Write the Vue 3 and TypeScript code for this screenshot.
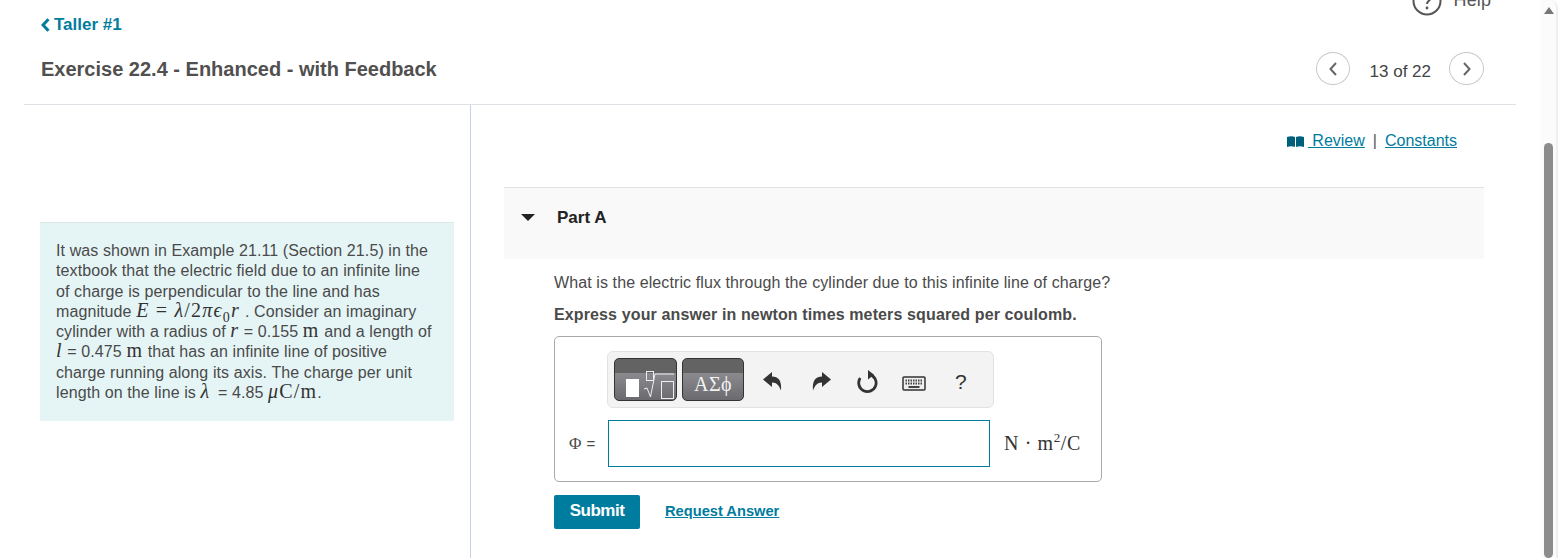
<template>
  <div class="page">
    <main class="content">
      <header class="top">
        <div class="help-row">
          <svg class="help-icon" width="30" height="30" viewBox="0 0 30 30">
            <circle cx="15" cy="15" r="13.500" fill="none" stroke="#555" stroke-width="2" />
            <path d="M11 11.500c0-5 8-5 8 0 0 3-4 3-4 6.500" fill="none" stroke="#555" stroke-width="2" />
            <circle cx="15" cy="22" r="1.400" fill="#555" />
          </svg>
          <span class="help-text">Help</span>
        </div>
        <a class="back" href="#">
          <svg width="9" height="14" viewBox="0 0 9 14"><path d="M7.500 1.200 2 7l5.500 5.800" fill="none" stroke="#007c9e" stroke-width="3" /></svg>
          Taller #1
        </a>
        <div class="title-row">
          <h1>Exercise 22.4 - Enhanced - with Feedback</h1>
          <nav class="pager">
            <button class="round prev" aria-label="Previous">
              <svg width="10" height="14" viewBox="0 0 10 14"><path d="M8 1 2.500 7 8 13" fill="none" stroke="#666" stroke-width="2" /></svg>
            </button>
            <span class="count">13 of 22</span>
            <button class="round next" aria-label="Next">
              <svg width="10" height="14" viewBox="0 0 10 14"><path d="M2 1l5.500 6L2 13" fill="none" stroke="#666" stroke-width="2" /></svg>
            </button>
          </nav>
        </div>
      </header>

      <div class="columns">
        <aside class="left">
          <div class="intro">
            It was shown in Example 21.11 (Section 21.5) in the textbook that the electric field due to an infinite line of charge is perpendicular to the line and has magnitude
            <span class="m formula"><i>E</i> = <i>λ</i>/2<i>πϵ</i><sub>0</sub><i>r</i></span>. Consider an imaginary cylinder with a radius of <span class="m"><i>r</i></span> = 0.155 <span class="m">m</span> and a length of <span class="m"><i>l</i></span> = 0.475 <span class="m">m</span> that has an infinite line of positive charge running along its axis. The charge per unit length on the line is <span class="m lambda"><i>λ</i></span> = 4.85 <span class="m"><i>μ</i>C/m</span>.
          </div>
        </aside>

        <section class="right">
          <div class="links">
            <svg width="17" height="11" viewBox="0 0 17 11"><path d="M0 1c3-1 5.500-1 8 0v10c-2.500-1-5-1-8 0zM9 1c2.500-1 5-1 8 0v10c-3-1-5.500-1-8 0z" fill="#00607c" /></svg>
            <a href="#">&nbsp;Review</a>
            <span class="sep">|</span>
            <a href="#">Constants</a>
          </div>

          <div class="part-head">
            <span class="caret"></span>
            <strong>Part A</strong>
          </div>

          <div class="part-body">
            <p class="question">What is the electric flux through the cylinder due to this infinite line of charge?</p>
            <p class="express">Express your answer in newton times meters squared per coulomb.</p>

            <div class="answer">
              <div class="toolbar">
                <div class="tool tool-a">
                  <span class="tmpl-box"></span>
                  <svg width="32" height="31" viewBox="0 0 32 31">
                    <rect x="3.500" y="2.500" width="7" height="9" fill="none" stroke="#eee" />
                    <path d="M1 20l3-1 3.500 9L12 5h19" fill="none" stroke="#eee" />
                    <rect x="18.500" y="12.500" width="12" height="17" fill="none" stroke="#eee" />
                  </svg>
                </div>
                <div class="tool tool-b">ΑΣϕ</div>
                <div class="icons">
                  <svg class="undo" width="19" height="19" viewBox="0 0 19 19"><path d="M0 7.500 9 0v4.500c6 0 10 3.500 9 14-2-5-4-8-9-8V15z" fill="#333" /></svg>
                  <svg class="redo" width="19" height="19" viewBox="0 0 19 19"><path d="M19 7.500 10 0v4.500c-6 0-10 3.500-9 14 2-5 4-8 9-8V15z" fill="#333" /></svg>
                  <svg class="reload" width="21" height="23" viewBox="0 0 21 23"><path d="M12 4.300a8.700 8.700 0 1 1-8.800 3.700" fill="none" stroke="#333" stroke-width="2.800" /><path d="M11 0v9.500l6-4.700z" fill="#333" /></svg>
                  <svg class="keys" width="24" height="15" viewBox="0 0 24 15">
                    <rect x="1" y="1" width="22" height="13" rx="1" fill="#eee" stroke="#333" stroke-width="1.500" />
                    <path d="M3.500 4.500h17M3.500 7.500h17" stroke="#444" stroke-width="2" stroke-dasharray="1.500 1" />
                    <path d="M6.500 11h11" stroke="#444" stroke-width="2" />
                  </svg>
                  <span class="qmark">?</span>
                </div>
              </div>
              <div class="input-row">
                <span class="label"><span class="phi">Φ</span> =</span>
                <input class="field" type="text" aria-label="Answer" />
                <span class="unit">N · m<sup>2</sup>/C</span>
              </div>
            </div>

            <div class="actions">
              <button class="submit">Submit</button>
              <a class="request" href="#">Request Answer</a>
            </div>
          </div>
        </section>
      </div>
    </main>

    <div class="scrollbar">
      <div class="track">
        <span class="arrow"></span>
        <span class="thumb"></span>
      </div>
    </div>
  </div>
</template>

<script setup lang="ts">
</script>

<style>
html, body { margin: 0; height: 100%; overflow: hidden; background: #fff; }
</style>

<style scoped>
.page {
  display: flex;
  height: 558px;
  overflow: hidden;
  font-family: "Liberation Sans", Arial, sans-serif;
  font-size: 16px;
  letter-spacing: 0.1px;
  color: #4a4a4a;
}
.content {
  width: 1516px;
  padding-left: 24px;
  box-sizing: border-box;
  flex: none;
}
.scrollbar {
  width: 47px;
  flex: none;
  padding-left: 25px;
  box-sizing: border-box;
}
.track {
  width: 15px;
  height: 558px;
  box-sizing: content-box;
  background: #fbfbfb;
  border-right: 2px solid #efefef;
  border-top-right-radius: 8px;
  display: flex;
  flex-direction: column;
  align-items: center;
}
.arrow {
  margin-top: 7px;
  width: 0;
  height: 0;
  border-left: 5px solid transparent;
  border-right: 5px solid transparent;
  border-bottom: 7px solid #777;
}
.thumb {
  width: 9px;
  height: 415px;
  margin-top: 129px;
  background: #8c8c8c;
  border-radius: 5px;
}

.top {
  height: 104px;
  border-bottom: 1px solid #dde1e6;
}
.help-row {
  height: 0;
  display: flex;
  justify-content: flex-end;
  align-items: flex-start;
  padding-right: 25px;
  gap: 12px;
}
.help-icon { margin-top: -14px; }
.help-text { margin-top: -12px; font-size: 18px; line-height: 24px; color: #555; }
.back {
  display: flex;
  align-items: center;
  gap: 4px;
  padding: 15px 0 0 17px;
  font-size: 17px;
  letter-spacing: 0;
  line-height: 20px;
  font-weight: 700;
  color: #007c9e;
  text-decoration: none;
}
.title-row {
  display: flex;
  justify-content: space-between;
  align-items: center;
  margin-top: 17px;
  padding: 0 32px 0 17px;
}
h1 {
  margin: 0;
  font-size: 20px;
  line-height: 26px;
  font-weight: 700;
  letter-spacing: 0;
  color: #505050;
}
.pager {
  display: flex;
  align-items: center;
  gap: 18px;
  font-size: 17px;
  letter-spacing: 0;
  color: #444;
}
.count { margin-top: 7px; }
.round {
  width: 34px;
  height: 33px;
  padding: 0;
  display: flex;
  align-items: center;
  justify-content: center;
  background: #fff;
  border: 1px solid #c8c8c8;
  border-radius: 50%;
}
.round.prev { margin-right: 2px; }
.round.next { width: 35px; }

.columns {
  display: flex;
  height: 453px;
}
.left {
  width: 447px;
  flex: none;
  box-sizing: border-box;
  border-right: 1px solid #c5d3e0;
  padding: 117px 16px 0;
}
.intro {
  width: 414px;
  box-sizing: border-box;
  padding: 18px 18px 18px 16px;
  border-top: 1px solid #dfe5e5;
  background: #e5f5f6;
  line-height: 20.300px;
}
.m {
  font-family: "Liberation Serif", "DejaVu Serif", serif;
  font-size: 20px;
  line-height: 0;
  letter-spacing: 1.200px;
  color: #333;
}
.m sub { font-size: 14px; line-height: 0; }
.formula { margin-right: 5px; }
.lambda { margin-right: 3px; }

.right {
  flex: 1;
  padding: 0 32px 0 33px;
  min-width: 0;
}
.links {
  display: flex;
  justify-content: flex-end;
  align-items: center;
  padding: 26px 27px 0 0;
  line-height: 20px;
  letter-spacing: 0;
}
.links a { color: #007c9e; }
.links svg { margin-right: 4px; }
.sep { margin: 0 8px; color: #555; }
.part-head {
  margin-top: 36px;
  height: 72px;
  border-top: 1px solid #e3e3e3;
  background: #f9f9f9;
  display: flex;
  align-items: flex-start;
  padding: 20px 0 0 17px;
  box-sizing: border-box;
  gap: 22px;
  font-size: 17px;
  letter-spacing: 0;
  color: #222;
}
.caret {
  margin-top: 6px;
  width: 0;
  height: 0;
  border-left: 7px solid transparent;
  border-right: 7px solid transparent;
  border-top: 7px solid #222;
}
.part-body { padding: 14px 0 0 50px; }
.question { margin: 0; line-height: 20px; }
.express { margin: 12px 0 0; line-height: 20px; font-weight: 700; letter-spacing: 0.125px; }
.answer {
  width: 548px;
  height: 146px;
  margin-top: 11px;
  box-sizing: border-box;
  border: 1px solid #aaa;
  border-radius: 5px;
  padding: 14px 0 0 52px;
}
.toolbar {
  display: flex;
  align-items: center;
  gap: 5px;
  width: 387px;
  height: 57px;
  box-sizing: border-box;
  padding-left: 6px;
  background: #f3f3f3;
  border: 1px solid #e2e2e2;
  border-radius: 6px;
}
.tool {
  height: 43px;
  box-sizing: border-box;
  border: 1px solid #333;
  border-radius: 5px;
  background: linear-gradient(#636363 0 14px, #8b8b8f 14px, #6a6a6f 100%);
  color: #f2f2f2;
}
.tool-a {
  width: 63px;
  display: flex;
  align-items: flex-end;
  justify-content: space-between;
  padding: 0 1px 0 11px;
}
.tmpl-box { width: 13px; height: 18px; background: #fff; margin-bottom: 3px; }
.tool-b {
  width: 62px;
  text-align: center;
  font-family: "Liberation Serif", "DejaVu Serif", serif;
  font-size: 20px;
  letter-spacing: 0.500px;
  line-height: 51px;
}
.icons {
  display: flex;
  align-items: center;
  margin: 3px 0 0 14px;
}
.redo { margin-left: 30px; }
.reload { margin-left: 26px; }
.keys { margin: 4px 0 0 24px; }
.qmark { margin: 1px 0 0 29px; font-size: 21px; color: #333; }
.input-row {
  display: flex;
  align-items: center;
  margin-top: 12px;
  margin-left: -38px;
}
.label { width: 39px; font-size: 15px; letter-spacing: 0.500px; flex: none; }
.phi { font-family: "Liberation Serif", serif; font-size: 17px; }
.field {
  width: 382px;
  height: 47px;
  box-sizing: border-box;
  border: 1px solid #007c9e;
  border-radius: 0;
  outline: none;
  padding: 0;
}
.unit {
  margin-left: 14px;
  font-family: "Liberation Serif", serif;
  font-size: 20px;
  letter-spacing: 0.600px;
  white-space: nowrap;
  color: #333;
}
.unit sup { font-size: 13px; line-height: 0; }
.actions {
  display: flex;
  align-items: center;
  margin-top: 13px;
  gap: 25px;
}
.submit {
  width: 86px;
  height: 34px;
  padding: 0 0 2px;
  border: 0;
  border-radius: 2px;
  background: #007c9e;
  color: #fff;
  font-family: inherit;
  font-size: 17px;
  font-weight: 700;
  letter-spacing: -0.500px;
}
.request {
  margin-top: -3px;
  font-size: 14.670px;
  letter-spacing: 0;
  font-weight: 700;
  color: #007c9e;
}
</style>
